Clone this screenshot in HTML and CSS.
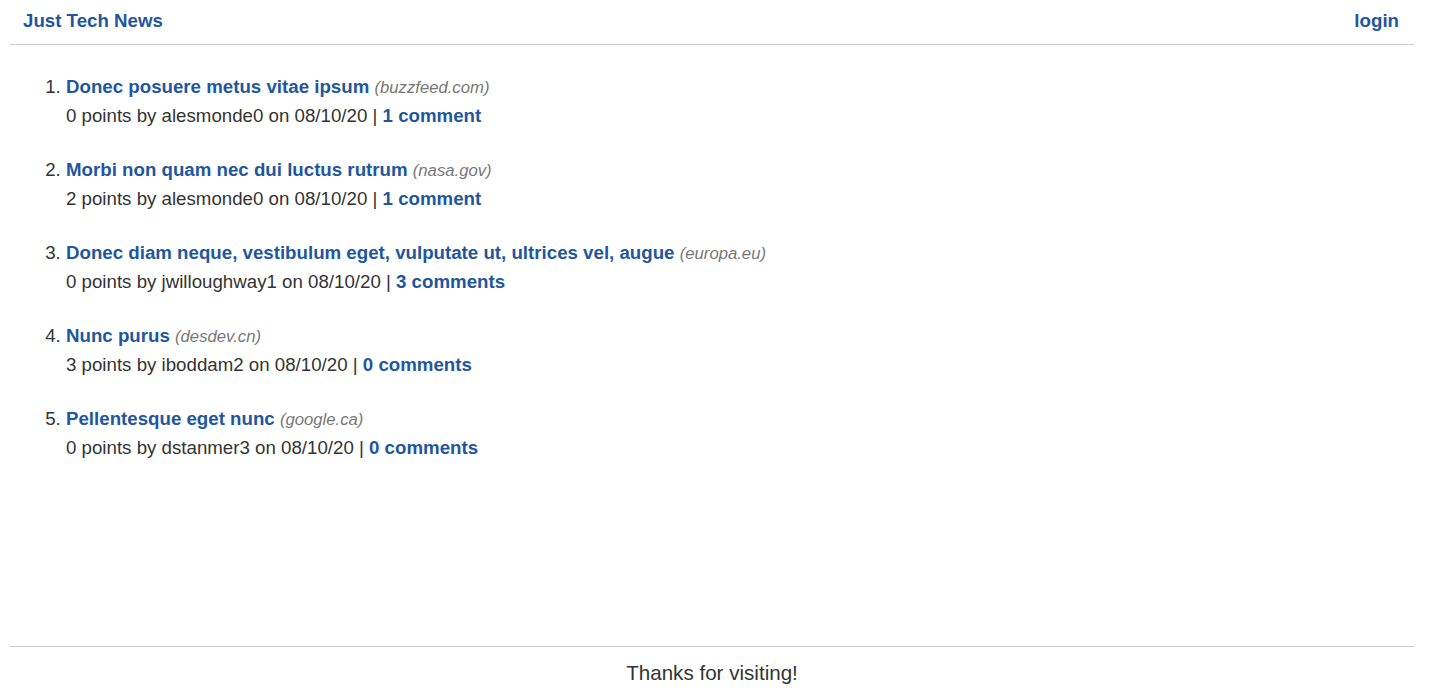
FILE: index.html
```html
<!DOCTYPE html>
<html lang="en">
<head>
<meta charset="utf-8">
<title>Just Tech News</title>
<link rel="stylesheet" href="styles.css">
</head>
<body>
<div class="page">
  <header class="site-header">
    <a class="brand" href="#">Just Tech News</a>
    <a class="nav-link" href="#">login</a>
  </header>
  <main class="content">
    <ol class="posts">
      <li class="post">
        <div class="title-line"><a class="post-title" href="#">Donec posuere metus vitae ipsum</a> <span class="domain">(buzzfeed.com)</span></div>
        <div class="meta">0 points by alesmonde0 on 08/10/20 | <a class="comments" href="#">1 comment</a></div>
      </li>
      <li class="post">
        <div class="title-line"><a class="post-title" href="#">Morbi non quam nec dui luctus rutrum</a> <span class="domain">(nasa.gov)</span></div>
        <div class="meta">2 points by alesmonde0 on 08/10/20 | <a class="comments" href="#">1 comment</a></div>
      </li>
      <li class="post">
        <div class="title-line"><a class="post-title" href="#">Donec diam neque, vestibulum eget, vulputate ut, ultrices vel, augue</a> <span class="domain">(europa.eu)</span></div>
        <div class="meta">0 points by jwilloughway1 on 08/10/20 | <a class="comments" href="#">3 comments</a></div>
      </li>
      <li class="post">
        <div class="title-line"><a class="post-title" href="#">Nunc purus</a> <span class="domain">(desdev.cn)</span></div>
        <div class="meta">3 points by iboddam2 on 08/10/20 | <a class="comments" href="#">0 comments</a></div>
      </li>
      <li class="post">
        <div class="title-line"><a class="post-title" href="#">Pellentesque eget nunc</a> <span class="domain">(google.ca)</span></div>
        <div class="meta">0 points by dstanmer3 on 08/10/20 | <a class="comments" href="#">0 comments</a></div>
      </li>
    </ol>
  </main>
  <footer class="site-footer">Thanks for visiting!</footer>
</div>
</body>
</html>
```

FILE: styles.css
```css
html, body {
  margin: 0;
  padding: 0;
  background: #ffffff;
}

body {
  font-family: "Liberation Sans", Arial, sans-serif;
  font-size: 18.7px;
  line-height: 29px;
  color: #333333;
}

.page {
  display: flex;
  flex-direction: column;
  min-height: 100vh;
  margin: 0 26px 0 10px;
}

a {
  color: #1f56a0;
  text-decoration: none;
  font-weight: bold;
}

.site-header {
  display: flex;
  justify-content: space-between;
  align-items: center;
  padding: 6px 15px 9px 13px;
  border-bottom: 1px solid #cccccc;
}

.content {
  flex: 1;
  padding: 0 16px;
}

.posts {
  margin: 27px 0 0;
  padding-left: 40px;
}

.post {
  margin-bottom: 25px;
}

.title-line,
.meta {
  height: 29px;
}

.domain {
  font-style: italic;
  font-size: 16.7px;
  line-height: 1;
  color: #777777;
}

.site-footer {
  border-top: 1px solid #cccccc;
  padding: 11px 0 6px;
  text-align: center;
  font-size: 20.6px;
}
```
